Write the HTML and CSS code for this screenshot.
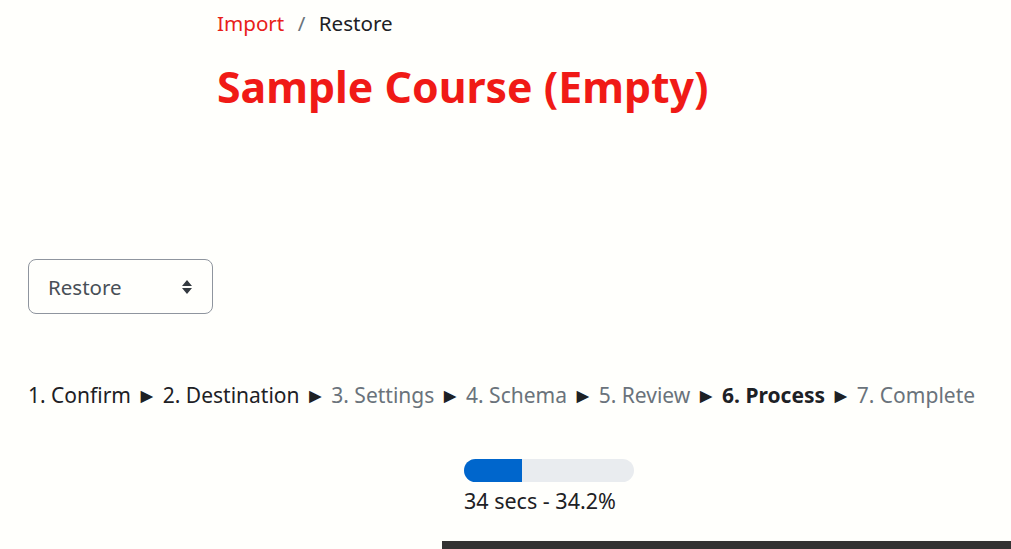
FILE: index.html
```html
<!DOCTYPE html>
<html lang="en">
<head>
    <meta charset="UTF-8">
    <meta name="viewport" content="width=device-width, initial-scale=1.0">
    <title>Restore - Sample Course (Empty)</title>
    <link rel="stylesheet" href="styles.css">
</head>
<body>
    <header class="page-header">
        <nav class="breadcrumb">
            <a href="#">Import</a>
            <span class="sep">/</span>
            <span class="current">Restore</span>
        </nav>
        <h1>Sample Course (Empty)</h1>
    </header>

    <div class="select-wrap">
        <select class="custom-select">
            <option>Restore</option>
        </select>
    </div>

    <div class="steps">
        <span class="done">1. Confirm</span> <span class="arrow">&#9658;</span>
        <span class="done">2. Destination</span> <span class="arrow">&#9658;</span>
        <span class="todo">3. Settings</span> <span class="arrow">&#9658;</span>
        <span class="todo">4. Schema</span> <span class="arrow">&#9658;</span>
        <span class="todo">5. Review</span> <span class="arrow">&#9658;</span>
        <span class="active">6. Process</span> <span class="arrow">&#9658;</span>
        <span class="todo">7. Complete</span>
    </div>

    <div class="progress-area">
        <div class="progress">
            <div class="progress-bar" style="width: 34.2%"></div>
        </div>
        <div class="progress-text">34 secs - 34.2%</div>
    </div>

    <div class="footer-bar"></div>
</body>
</html>
```

FILE: styles.css
```css
body {
    margin: 0;
    background-color: #fffffc;
    font-family: "Noto Sans", sans-serif;
    color: #1d2125;
    overflow: hidden;
    height: 549px;
    position: relative;
}
.page-header {
    padding: 8px 0 0 217px;
    height: 192px;
}
.breadcrumb {
    font-size: 20.6px;
    line-height: 30px;
}
.breadcrumb a {
    color: #e8201a;
    text-decoration: none;
}
.breadcrumb .sep {
    color: #6a737b;
    margin: 0 8px;
}
h1 {
    margin: 25px 0 0;
    font-size: 42.8px;
    line-height: 48px;
    font-weight: 700;
    color: #f01a16;
}
.select-wrap {
    padding: 59px 0 0 28px;
}
.custom-select {
    width: 185px;
    height: 55px;
    padding: 0 16px 0 19px;
    font-family: inherit;
    font-size: 20.5px;
    color: #495057;
    background-color: #fffffc;
    border: 1px solid #8f959e;
    border-radius: 8px;
    appearance: none;
    background-image: url("data:image/svg+xml,%3Csvg xmlns='http://www.w3.org/2000/svg' width='12' height='16' viewBox='0 0 12 16'%3E%3Cpath d='M6 1 L11 7 H1 Z M6 15 L11 9 H1 Z' fill='%23343a40'/%3E%3C/svg%3E");
    background-repeat: no-repeat;
    background-position: right 19px center;
    background-size: 12px 16px;
}
.steps {
    padding: 66px 0 0 28px;
    font-size: 21px;
    line-height: 30px;
    white-space: nowrap;
}
.steps .done {
    color: #1d2125;
}
.steps .todo {
    color: #6a737b;
}
.steps .active {
    font-weight: 700;
    color: #1d2125;
}
.steps .arrow {
    color: #1d2125;
    font-size: 21px;
}
.progress-area {
    padding: 49px 0 0 464px;
}
.progress {
    width: 170px;
    height: 23px;
    border-radius: 12px;
    background-color: #e9ecef;
    overflow: hidden;
}
.progress-bar {
    height: 100%;
    background-color: #0066cc;
}
.progress-text {
    margin-top: 4px;
    font-size: 21.5px;
    line-height: 30px;
}
.footer-bar {
    position: absolute;
    left: 442px;
    right: 0;
    top: 541px;
    height: 8px;
    background-color: #333;
}
```
